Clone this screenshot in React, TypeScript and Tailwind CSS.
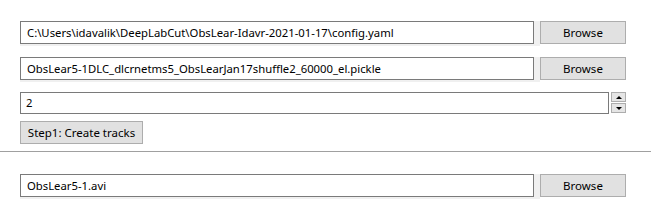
import React from 'react';

const font = { fontFamily: '"Noto Sans", "Open Sans", sans-serif' };

function PathRow({ value }: { value: string }) {
  return (
    <div className="flex items-start">
      <div className="bg-[#f0f0f0] pr-[6px] pb-[2px]">
        <div className="w-[514px] h-[23px] border border-[#7a7a7a] bg-white flex items-center pl-[6px] text-[11.3px] text-black leading-none whitespace-nowrap overflow-hidden">
          {value}
        </div>
      </div>
      <button className="w-[86px] h-[23px] border border-[#adadad] bg-[#e1e1e1] text-[11.5px] text-black leading-none">
        Browse
      </button>
    </div>
  );
}

export default function App() {
  return (
    <div className="w-[651px] h-[221px] bg-white" style={font}>
      <div className="pl-[20px] pt-[21px] flex flex-col">
        <PathRow value="C:\Users\idavalik\DeepLabCut\ObsLear-Idavr-2021-01-17\config.yaml" />
        <div className="mt-[11px]">
          <PathRow value="ObsLear5-1DLC_dlcrnetms5_ObsLearJan17shuffle2_60000_el.pickle" />
        </div>
        <div className="mt-[10px] flex items-start">
          <div className="w-[589px] h-[22px] border border-[#7a7a7a] bg-white flex items-center pl-[5px] text-[11.3px] leading-none">
            2
          </div>
          <div className="ml-[2px] flex flex-col gap-[1px]">
            <div className="w-[15px] h-[10px] border border-[#adadad] bg-[#e5e5e5] flex items-center justify-center">
              <div className="w-0 h-0 border-l-[3px] border-r-[3px] border-b-[3px] border-l-transparent border-r-transparent border-b-black" />
            </div>
            <div className="w-[15px] h-[10px] border border-[#adadad] bg-[#e5e5e5] flex items-center justify-center">
              <div className="w-0 h-0 border-l-[3px] border-r-[3px] border-t-[3px] border-l-transparent border-r-transparent border-t-black" />
            </div>
          </div>
        </div>
        <button className="mt-[7px] w-[123px] h-[23px] border border-[#adadad] bg-[#e1e1e1] text-[11.5px] text-black leading-none">
          Step1: Create tracks
        </button>
      </div>
      <div className="mt-[7px] h-[1px] bg-[#a0a0a0]" />
      <div className="pl-[20px] pt-[22px]">
        <PathRow value="ObsLear5-1.avi" />
      </div>
    </div>
  );
}
